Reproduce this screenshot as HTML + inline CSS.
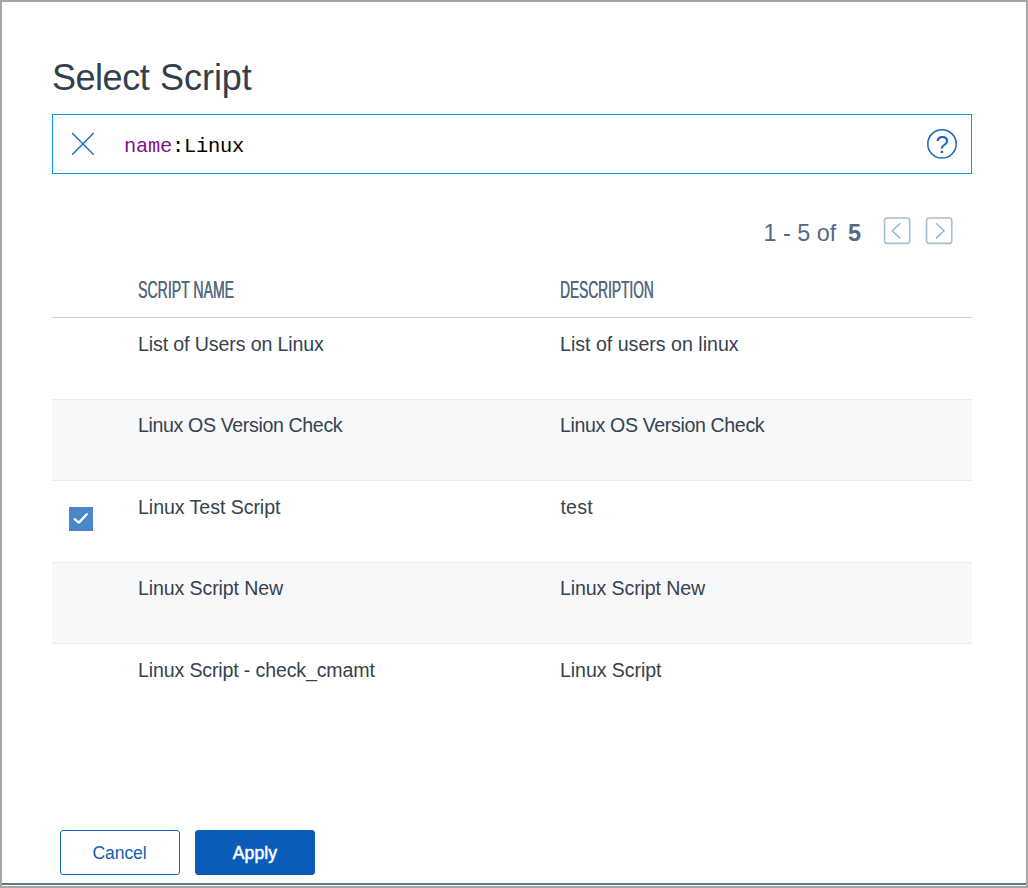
<!DOCTYPE html>
<html lang="en">
<head>
<meta charset="utf-8">
<title>Select Script</title>
<style>
  html, body { margin: 0; padding: 0; }
  body {
    width: 1028px; height: 888px; overflow: hidden; position: relative;
    background: #a6a6a6;
    font-family: "Liberation Sans", sans-serif;
    color: #36424f;
  }
  .abs { position: absolute; }
  .dialog { left: 2px; top: 2px; width: 1024px; height: 884px; background: #fff; }
  .botline { left: 2px; top: 883px; width: 1024px; height: 2px; background: #5f798b; }
  .nw { white-space: nowrap; line-height: 1; }

  h1.title { margin: 0; font-weight: normal; left: 52px; top: 60px; font-size: 36px; letter-spacing: -0.17px; color: #333f4c; }

  .search { left: 52px; top: 114px; width: 918px; height: 58px; border: 1px solid #0c99e6; background: #fff; }
  .query { left: 124px; top: 136.5px; font-family: "Liberation Mono", monospace; font-size: 20.4px; letter-spacing: -0.24px; color: #000; }
  .query .kw { color: #80108c; }

  .pager { color: #526b81; font-size: 23.4px; top: 221.5px; }
  .pbtn { top: 218px; width: 24px; height: 23px; border: 1.5px solid #a9c1d1; border-radius: 3px; background: #fff; }

  .th { top: 277.6px; font-size: 24.4px; color: #526a80; transform-origin: 0 0; transform: scaleX(0.5775); text-shadow: 0.3px 0 0 #526a80; }
  .hline { left: 52px; top: 317px; width: 920px; height: 1px; background: #ced1d3; }

  .row { left: 52px; width: 920px; }
  .row.alt { background: #f7f8fa; }
  .rline { left: 52px; width: 920px; height: 1px; background: #e8eaec; }
  .cell { font-size: 19.6px; color: #36424f; }
  .c1 { left: 138px; }
  .c2 { left: 560px; }

  .cb { left: 69px; top: 507px; width: 24px; height: 24px; background: #4a86c8; }

  .btn { top: 830px; width: 120px; height: 45px; box-sizing: border-box; border-radius: 3px; font-size: 17.6px; text-align: center; line-height: 45px; }
  .btn.cancel { left: 60px; border: 1px solid #1565c0; color: #155db6; background: #fff; letter-spacing: -0.1px; text-indent: -1px; }
  .btn.apply { left: 195px; border: 1px solid #0b5cb8; background: #0b5cb8; color: #fff; -webkit-text-stroke: 0.5px #fff; letter-spacing: 0.1px; }
</style>
</head>
<body>
<div class="abs dialog"></div>
<div class="abs botline"></div>

<h1 class="abs nw title"><span style="letter-spacing:-0.47px">Select</span> <span style="letter-spacing:-0.07px;margin-left:1px">Script</span></h1>

<div class="abs search"></div>
<svg class="abs" style="left:68px;top:129px" width="30" height="30" viewBox="0 0 30 30">
  <path d="M4.1 4.0 L25.7 25.7 M25.7 4.0 L4.1 25.7" stroke="#1767c3" stroke-width="1.35" fill="none"/>
</svg>
<div class="abs nw query"><span class="kw">name</span>:Linux</div>
<svg class="abs" style="left:922px;top:124px" width="40" height="40" viewBox="0 0 40 40">
  <circle cx="20" cy="19.9" r="14.2" fill="none" stroke="#1a63bd" stroke-width="1.5"/>
  <text x="20.3" y="28.6" text-anchor="middle" font-family="Liberation Sans, sans-serif" font-size="24" fill="#1a63bd">?</text>
</svg>

<div class="abs nw pager" style="left:763.4px">1 - 5 of</div>
<div class="abs nw pager" style="left:848px;font-weight:bold">5</div>
<svg class="abs" style="left:875px;top:210px" width="90" height="45" viewBox="875 210 90 45">
  <rect x="884.55" y="217.95" width="25.2" height="25.45" rx="2.6" fill="#fff" stroke="#a5c0d3" stroke-width="1.65"/>
  <rect x="926.55" y="217.95" width="25.2" height="25.45" rx="2.6" fill="#fff" stroke="#a5c0d3" stroke-width="1.65"/>
  <path d="M900.4 223.3 L892.3 230.8 L900.4 238.4" stroke="#9ab5ca" stroke-width="1.5" fill="none"/>
  <path d="M936 223.3 L944.1 230.8 L936 238.4" stroke="#9ab5ca" stroke-width="1.5" fill="none"/>
</svg>

<div class="abs nw th" style="left:138px">SCRIPT NAME</div>
<div class="abs nw th" style="left:560.3px;transform:scaleX(0.5625)">DESCRIPTION</div>
<div class="abs hline"></div>

<div class="abs row alt" style="top:399px;height:81px"></div>
<div class="abs row alt" style="top:562px;height:81px"></div>
<div class="abs rline" style="top:399px"></div>
<div class="abs rline" style="top:480px"></div>
<div class="abs rline" style="top:562px"></div>
<div class="abs rline" style="top:643px"></div>

<div class="abs nw cell c1" style="top:335.3px;letter-spacing:-0.12px">List of Users on Linux</div>
<div class="abs nw cell c2" style="top:335.3px;letter-spacing:0px">List of users on linux</div>
<div class="abs nw cell c1" style="top:416.3px;letter-spacing:-0.37px">Linux OS Version Check</div>
<div class="abs nw cell c2" style="top:416.3px;letter-spacing:-0.37px">Linux OS Version Check</div>
<div class="abs nw cell c1" style="top:497.8px;letter-spacing:-0.06px">Linux Test Script</div>
<div class="abs nw cell c2" style="top:497.8px;left:560.4px;letter-spacing:0.2px">test</div>
<div class="abs nw cell c1" style="top:579.3px;letter-spacing:-0.12px">Linux Script New</div>
<div class="abs nw cell c2" style="top:579.3px;letter-spacing:-0.12px">Linux Script New</div>
<div class="abs nw cell c1" style="top:661.3px;letter-spacing:-0.15px">Linux Script - check_cmamt</div>
<div class="abs nw cell c2" style="top:661.3px;letter-spacing:-0.08px">Linux Script</div>

<div class="abs cb"></div>
<svg class="abs" style="left:69px;top:507px" width="24" height="24" viewBox="0 0 24 24">
  <path d="M5.8 12.3 L9.9 15.6 L17.8 7.2" stroke="#fff" stroke-width="2.3" stroke-linecap="round" stroke-linejoin="round" fill="none"/>
</svg>

<div class="abs nw btn cancel">Cancel</div>
<div class="abs nw btn apply">Apply</div>
</body>
</html>
